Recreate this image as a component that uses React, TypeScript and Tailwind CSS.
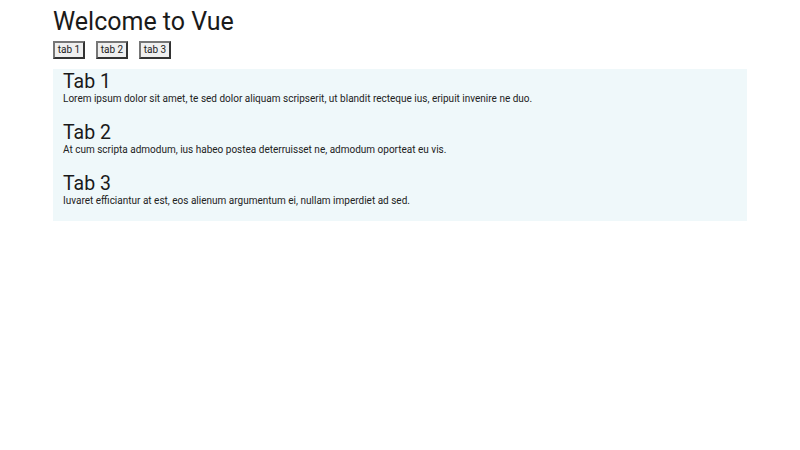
const tabs = [
  { title: 'Tab 1', body: 'Lorem ipsum dolor sit amet, te sed dolor aliquam scripserit, ut blandit recteque ius, eripuit invenire ne duo.' },
  { title: 'Tab 2', body: 'At cum scripta admodum, ius habeo postea deterruisset ne, admodum oporteat eu vis.' },
  { title: 'Tab 3', body: 'Iuvaret efficiantur at est, eos alienum argumentum ei, nullam imperdiet ad sed.' },
];

export default function App() {
  return (
    <div className="min-h-screen bg-white px-[53px] pt-[6px] text-[#222] font-['Roboto',sans-serif]">
      <h1 className="text-[25px] leading-[32px] text-[#1a1a1a]">Welcome to Vue</h1>

      <div className="mt-[3px] flex gap-[11px]">
        {tabs.map((t, i) => (
          <button
            key={t.title}
            className="h-[18px] w-[32px] text-[10px] leading-none bg-[#efefef] border-2 border-t-[#767676] border-l-[#767676] border-b-[#333] border-r-[#333]"
          >
            tab {i + 1}
          </button>
        ))}
      </div>

      <div className="mt-[10px] bg-[#eff8fa] px-[10px] pt-[2px] pb-[14px]">
        {tabs.map((t, i) => (
          <section key={t.title} className={i > 0 ? 'mt-[17px]' : ''}>
            <h2 className="text-[19.5px] leading-[21px] text-[#1a1a1a]">{t.title}</h2>
            <p className="text-[10px] leading-[13px] text-[#222]">{t.body}</p>
          </section>
        ))}
      </div>
    </div>
  );
}
